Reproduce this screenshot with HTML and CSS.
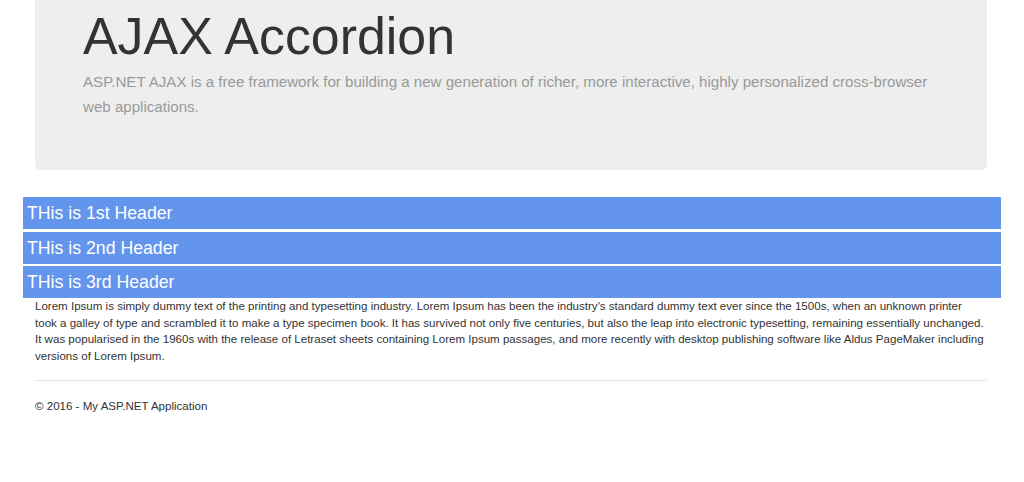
FILE: index.html
```html
<!DOCTYPE html>
<html lang="en">
<head>
<meta charset="utf-8">
<title>AJAX Accordion</title>
<link rel="stylesheet" href="styles.css">
</head>
<body>
<div class="container">
  <div class="jumbotron">
    <h1 class="title">AJAX Accordion</h1>
    <p class="lead">ASP.NET AJAX is a free framework for building a new generation of richer, more interactive, highly personalized cross-browser web applications.</p>
  </div>
</div>
<div class="accordion">
  <div class="acc-header">THis is 1st Header</div>
  <div class="acc-header">THis is 2nd Header</div>
  <div class="acc-header">THis is 3rd Header</div>
  <div class="acc-content">Lorem Ipsum is simply dummy text of the printing and typesetting industry. Lorem Ipsum has been the industry's standard dummy text ever since the 1500s, when an unknown printer took a galley of type and scrambled it to make a type specimen book. It has survived not only five centuries, but also the leap into electronic typesetting, remaining essentially unchanged. It was popularised in the 1960s with the release of Letraset sheets containing Lorem Ipsum passages, and more recently with desktop publishing software like Aldus PageMaker including versions of Lorem Ipsum.</div>
</div>
<div class="container">
  <hr class="rule">
  <footer class="footer">© 2016 - My ASP.NET Application</footer>
</div>
</body>
</html>
```
FILE: styles.css
```css
html, body {
  margin: 0;
  padding: 0;
  background: #fff;
}
body {
  font-family: "Liberation Sans", Arial, Helvetica, sans-serif;
  font-size: 11.55px;
  line-height: 16.7px;
  color: #333;
}
.container {
  width: 952px;
  margin: 0 0 0 35px;
}
.jumbotron {
  background: #eee;
  border-radius: 0 0 5px 5px;
  height: 170px;
  padding: 0 50px 0 48px;
  box-sizing: border-box;
  overflow: hidden;
}
.title {
  margin: 0;
  padding-top: 6px;
  font-size: 51.9px;
  line-height: 60px;
  font-weight: normal;
  color: #333;
}
.lead {
  margin: 4px 0 0 0;
  font-size: 15.1px;
  line-height: 24.8px;
  color: #999;
  font-weight: 300;
}
.accordion {
  margin: 27px 23px 0 23px;
}
.acc-header {
  background: #6495ed;
  color: #fff;
  font-size: 17.7px;
  height: 32px;
  line-height: 32px;
  padding-left: 4px;
  margin-bottom: 2.5px;
}
.acc-header:nth-child(3) {
  margin-bottom: 0;
}
.acc-content {
  padding: 0 16px 0 12px;
}
.rule {
  border: 0;
  border-top: 1px solid #e4e4e4;
  margin: 15px 0 17px 0;
}
.footer {
  padding-bottom: 20px;
}
```
